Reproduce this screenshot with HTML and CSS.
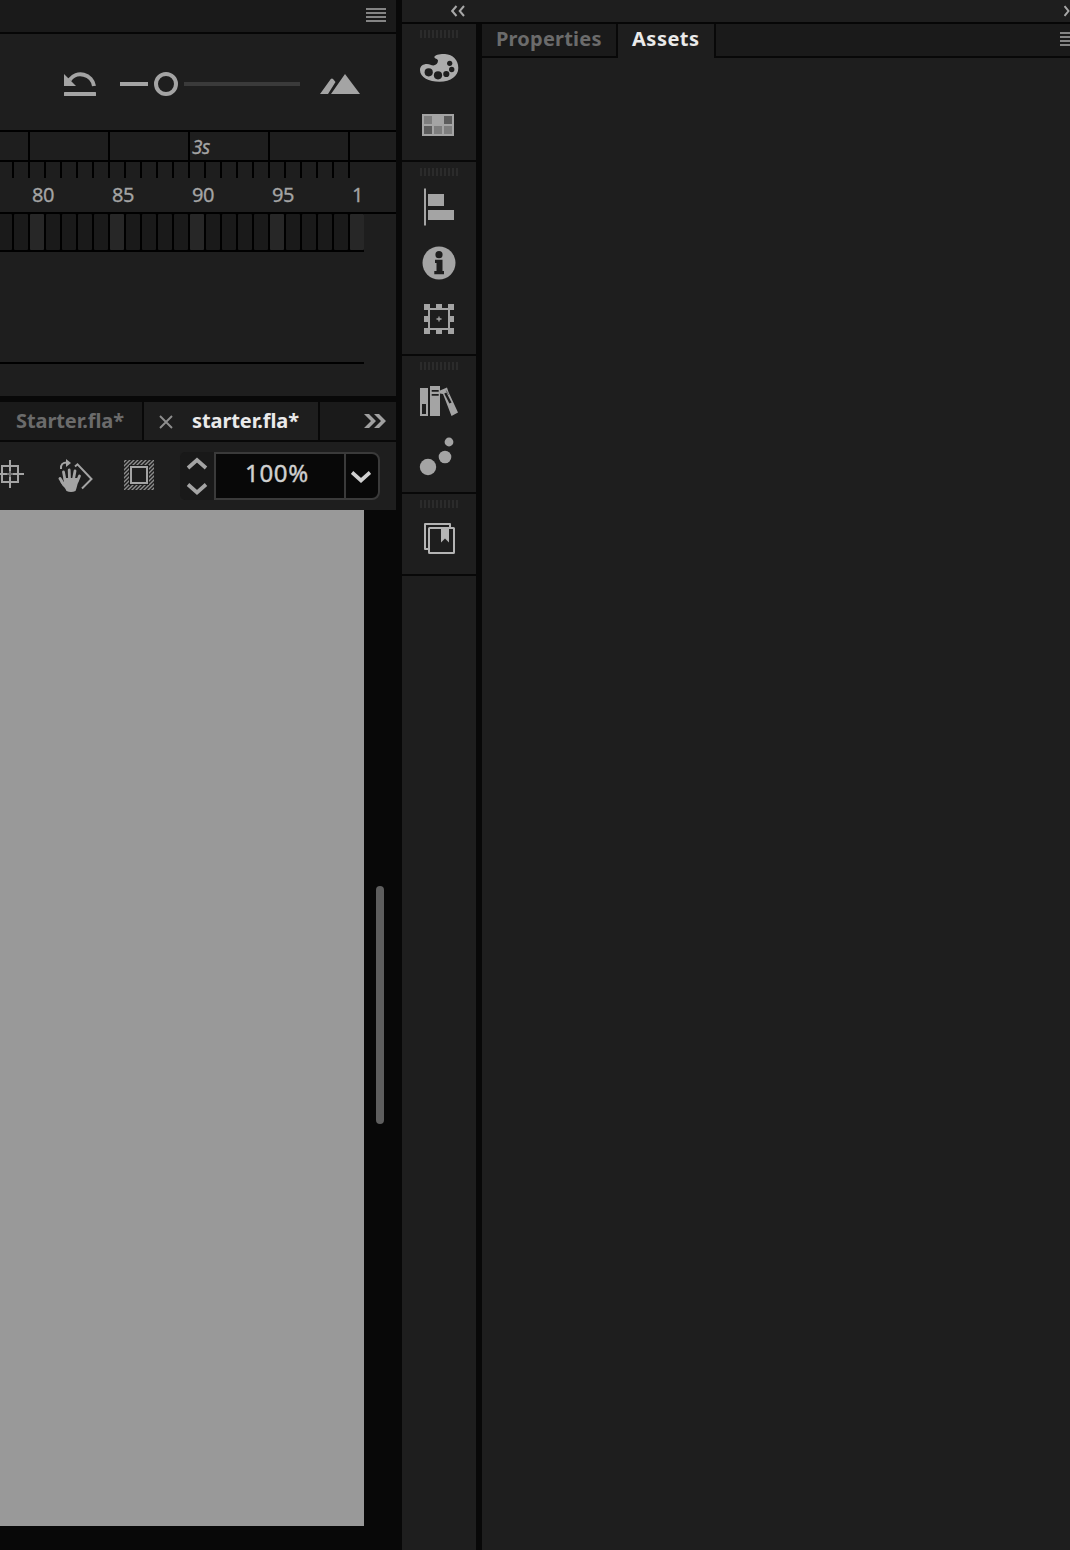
FILE: index.html
```html
<!DOCTYPE html>
<html lang="en">
  <head>
    <meta charset="UTF-8" />
    <meta name="viewport" content="width=device-width, initial-scale=1.0" />
    <title>starter.fla</title>
    <link rel="stylesheet" href="styles.css">
  </head>
  <body>
    <div class="workspace">
      <div class="editor">
        <section class="timeline">
          <div class="timeline-header">
            <div class="menu-icon"><i></i><i></i><i></i><i></i></div>
          </div>

          <div class="timeline-controls">
            <svg class="reset-icon" width="32" height="26" viewBox="0 0 32 26">
              <path d="M0 3 L12 15 H0 Z" fill="#a4a4a4" />
              <path d="M5.500 9 A13.600 13.600 0 0 1 30 15" fill="none" stroke="#a4a4a4" stroke-width="4" />
              <rect y="21" width="32" height="4" rx="0.500" fill="#a4a4a4" />
            </svg>
            <div class="slider">
              <div class="slider-fill"></div>
              <div class="slider-knob"></div>
              <div class="slider-rest"></div>
            </div>
            <svg class="mountains" width="40" height="20" viewBox="0 0 40 20">
              <path d="M25 0 L40 20 H11 Z M0 20 L10.800 5 Q12 4 13 5 L15.500 8 L8 20 Z" fill="#a4a4a4" />
            </svg>
          </div>

          <div class="seconds-row">
            <span></span><span></span><span></span><span class="second">3s</span><span></span><span></span>
          </div>

          <div class="ruler">
            <div class="ticks"></div>
            <div class="frame-numbers">
              <span>80</span><span>85</span><span>90</span><span>95</span><span>1</span>
            </div>
          </div>

          <div class="frames-row">
            <div class="frames" id="frames"></div>
          </div>
          <div class="layer-space"></div>
          <div class="layer-end"></div>
        </section>

        <section class="document">
          <div class="doc-tabs">
            <div class="doc-tab">Starter.fla*</div>
            <div class="doc-tab active">
              <svg width="14" height="14" viewBox="0 0 14 14">
                <path d="M1 1 L13 13 M13 1 L1 13" stroke="#8e8e8e" stroke-width="1.900" />
              </svg>
              <span>starter.fla*</span>
            </div>
            <div class="doc-more">
              <svg width="22" height="14" viewBox="0 0 22 14">
                <path d="M0 0 H5 L12 7 L5 14 H0 L7 7 Z M10 0 H15 L22 7 L15 14 H10 L17 7 Z" fill="#a0a0a0" />
              </svg>
            </div>
          </div>

          <div class="doc-toolbar">
            <svg class="tools" width="180" height="68" viewBox="0 0 180 68">
              <!-- center stage -->
              <g fill="none" stroke="#a4a4a4" stroke-width="2">
                <rect x="2" y="24" width="16" height="16" />
                <path d="M10 18 V29 M10 35 V46 M-2 32 H7 M13 32 H24" />
                <path d="M7 32 H13 M10 29 V35" stroke="#777" />
              </g>
              <!-- rotate hand -->
              <path d="M75 24.500 L77.500 22.300 L91.500 37 L82 46.500" fill="none" stroke="#a4a4a4" stroke-width="2" />
              <path d="M61 27 C60.500 22 63 20.500 67 20.500" fill="none" stroke="#a4a4a4" stroke-width="2" />
              <path d="M66 17 L71 21 L66 25 Z" fill="#a4a4a4" />
              <path d="M64 43 L60 36.500" stroke="#a4a4a4" stroke-width="3" stroke-linecap="round" />
              <path d="M65 38 L63.500 30 M69.500 37 L69.200 28 M73.500 37 L75 29 M77 40 L79.500 34" stroke="#a4a4a4" stroke-width="2.800" stroke-linecap="round" />
              <path d="M63.600 36 H77.500 L78.600 38 C77.500 42 76.500 47 75.500 49 Q71 51 66.500 49 C65.500 46 62 43 60 39.500 L64 40 Z" fill="#a4a4a4" />
              <!-- clip outside stage -->
              <defs>
                <pattern id="hatch" width="4" height="4" patternUnits="userSpaceOnUse">
                  <path d="M-1 1 L1 -1 M0 4 L4 0 M3 5 L5 3" stroke="#8e8e8e" stroke-width="1.400" />
                </pattern>
              </defs>
              <rect x="124" y="18" width="30" height="30" fill="url(#hatch)" />
              <rect x="129" y="23" width="20" height="20" fill="#1e1e1e" />
              <rect x="131" y="25" width="16" height="16" fill="none" stroke="#a4a4a4" stroke-width="2" />
            </svg>
            <div class="stepper">
              <svg width="34" height="48" viewBox="0 0 34 48">
                <path d="M8 16 L17 8 L26 16 M8 32.500 L17 40.500 L26 32.500" fill="none" stroke="#a4a4a4" stroke-width="3.700" />
              </svg>
            </div>
            <div class="zoom-box">
              <div class="zoom-value">100%</div>
              <div class="zoom-arrow">
                <svg width="20" height="14" viewBox="0 0 20 14">
                  <path d="M1 1.500 L10 9.500 L19 1.500" fill="none" stroke="#d0d0d0" stroke-width="3.700" />
                </svg>
              </div>
            </div>
          </div>

          <div class="canvas-area">
            <div class="stage"></div>
            <div class="scrollbar"><div class="scroll-thumb"></div></div>
          </div>
        </section>
      </div>

      <div class="dock">
        <div class="dock-header">
          <svg width="14" height="12" viewBox="0 0 14 12">
            <path d="M5.500 1 L1.200 6 L5.500 11 M13 1 L8.700 6 L13 11" fill="none" stroke="#a8a8a8" stroke-width="2" />
          </svg>
          <svg width="6" height="12" viewBox="0 0 6 12">
            <path d="M0.500 1 L4.500 6 L0.500 11" fill="none" stroke="#a8a8a8" stroke-width="2" />
          </svg>
        </div>

        <div class="dock-body">
          <div class="icon-bar">
            <div class="icon-group">
              <div class="grip"></div>
              <svg width="74" height="56" viewBox="0 0 74 56">
                <path d="M18 30 C18 26 21 24 25 24 C28 24.300 29 25.500 31.500 25.500 C34.500 25 36 23 36 20.500 C36 18.500 32.300 19 32.300 16.700 C34 14.300 39 14 43 14 C51 14.500 56.300 20 56.300 28 C56.300 36 49 41.700 37.500 41.700 C27 41.700 18 37.500 18 30 Z" fill="#acacac" />
                <g fill="#1e1e1e">
                  <circle cx="26.700" cy="32.300" r="4.100" />
                  <circle cx="36" cy="35.300" r="4.100" />
                  <circle cx="44.300" cy="34" r="3.100" />
                  <circle cx="49.700" cy="29.500" r="2.700" />
                  <circle cx="47.700" cy="23.300" r="2.600" />
                </g>
              </svg>
              <svg width="74" height="56" viewBox="0 0 74 56">
                <rect x="20" y="18" width="32" height="22" fill="#a4a4a4" />
                <path d="M22 20 h8 v8 h-8 Z M32 30 h8 v8 h-8 Z M42 30 h8 v8 h-8 Z" fill="#7e7e7e" />
                <path d="M42 20 h8 v8 h-8 Z M22 30 h8 v8 h-8 Z" fill="#5c5c5c" />
              </svg>
            </div>

            <div class="icon-group">
              <div class="grip"></div>
              <svg width="74" height="56" viewBox="0 0 74 56">
                <path d="M22 10.500 H24 V47.500 H22 Z M26 16 H42 V28 H26 Z M26 32 H52 V42 H26 Z" fill="#a4a4a4" />
              </svg>
              <svg width="74" height="56" viewBox="0 0 74 56">
                <circle cx="37" cy="29" r="16.500" fill="#a4a4a4" />
                <circle cx="37" cy="20.700" r="3.600" fill="#1e1e1e" />
                <path d="M33 25.700 H40.500 V37 H42 V40.300 H32.300 V37 H34.500 V29 H33 Z" fill="#1e1e1e" />
              </svg>
              <svg width="74" height="56" viewBox="0 0 74 56">
                <rect x="27" y="19" width="20" height="20" fill="none" stroke="#a4a4a4" stroke-width="2" />
                <path d="M22 14 h6 v6 h-6 Z M34 14 h6 v6 h-6 Z M46 14 h6 v6 h-6 Z M22 26 h6 v6 h-6 Z M46 26 h6 v6 h-6 Z M22 38 h6 v6 h-6 Z M34 38 h6 v6 h-6 Z M46 38 h6 v6 h-6 Z" fill="#a4a4a4" />
                <path d="M37 26.500 V31.500 M34.500 29 H39.500" stroke="#a4a4a4" stroke-width="1.300" />
              </svg>
            </div>

            <div class="icon-group">
              <div class="grip"></div>
              <svg width="74" height="56" viewBox="0 0 74 56">
                <path d="M18 16 H26 V44 H18 Z M28 14 H38 V44 H28 Z" fill="#a4a4a4" />
                <path d="M20 32 h4 v10 h-4 Z M29.700 18 h7 v1.700 h-7 Z M29.700 22 h7 v1.700 h-7 Z" fill="#1e1e1e" />
                <path d="M38 18.500 L45 15.500 L46.500 20 L56 40.500 L49.500 44 L41 22 L38 21.500 Z" fill="#a4a4a4" />
                <path d="M43.300 21 L48.500 31" stroke="#1e1e1e" stroke-width="2.400" />
                <path d="M44.200 18.500 L46.500 23" stroke="#666" stroke-width="1" />
              </svg>
              <svg width="74" height="56" viewBox="0 0 74 56">
                <g fill="#a4a4a4">
                  <circle cx="26" cy="39" r="8.200" />
                  <circle cx="43" cy="29" r="6.300" />
                  <circle cx="47" cy="14" r="4.400" />
                </g>
              </svg>
            </div>

            <div class="icon-group">
              <div class="grip"></div>
              <svg width="74" height="56" viewBox="0 0 74 56">
                <path d="M26 39 H23 V14 H48 V17" fill="none" stroke="#b4b4b4" stroke-width="2" stroke-linejoin="round" />
                <rect x="27" y="18" width="25" height="25" rx="0.500" fill="none" stroke="#b4b4b4" stroke-width="2" />
                <path d="M39 18 H47 V32.500 L43 28.500 L39 32.500 Z" fill="#b4b4b4" />
              </svg>
            </div>
          </div>

          <div class="panel">
            <div class="panel-tabs">
              <div class="panel-tab properties">Properties</div>
              <div class="panel-tab active">Assets</div>
              <div class="panel-tabs-rest">
                <div class="menu-icon"><i></i><i></i><i></i><i></i></div>
              </div>
            </div>
            <div class="panel-content"></div>
          </div>
        </div>
      </div>
    </div>

    <script>
      const frames = document.getElementById('frames');

      // frames 78 to 100, every fifth one is highlighted
      for (let i = 78; i <= 100; i++) {
        const frame = document.createElement('span');
        frame.className = i % 5 === 0 ? 'frame fifth' : 'frame';
        frames.appendChild(frame);
      }
    </script>
  </body>
</html>
```

FILE: styles.css
```css
* {
  margin: 0;
  padding: 0;
  box-sizing: border-box;
}

body {
  font-family: 'Noto Sans', 'Open Sans', sans-serif;
  background: #080808;
  color: #a4a4a4;
  height: 1550px;
  overflow: hidden;
}

svg {
  display: block;
  flex: none;
}

.workspace {
  display: flex;
  gap: 6px;
  height: 1550px;
}

.editor {
  width: 396px;
  display: flex;
  flex-direction: column;
  gap: 6px;
  overflow: hidden;
}

.menu-icon {
  width: 20px;
  flex: none;
  display: flex;
  flex-direction: column;
  gap: 2px;
}

.menu-icon i {
  height: 2px;
  background: #858585;
}

/* timeline */
.timeline {
  height: 396px;
  background: #1e1e1e;
}

.timeline-header {
  height: 34px;
  padding: 8px 10px 0 0;
  display: flex;
  justify-content: flex-end;
  background: #1a1a1a;
  border-bottom: 2px solid #060606;
}

.timeline-controls {
  height: 98px;
  padding: 0 36px 0 64px;
  display: flex;
  align-items: center;
  border-bottom: 2px solid #000;
}

.reset-icon {
  margin-top: 4px;
}

.slider {
  width: 180px;
  margin: 4px 20px 0 24px;
  display: flex;
  align-items: center;
}

.slider-fill {
  width: 28px;
  height: 4px;
  background: #a4a4a4;
}

.slider-knob {
  width: 24px;
  height: 24px;
  margin: 0 6px;
  border: 4px solid #a4a4a4;
  border-radius: 50%;
}

.slider-rest {
  flex: 1;
  height: 4px;
  background: #3a3a3a;
}

.mountains {
  margin-top: 4px;
}

.seconds-row {
  height: 30px;
  display: flex;
  border-bottom: 2px solid #000;
}

.seconds-row span {
  width: 80px;
  flex: none;
  border-right: 2px solid #000;
}

.seconds-row span:first-child {
  width: 30px;
}

.seconds-row .second {
  padding-left: 2px;
  font-size: 19px;
  font-style: italic;
  line-height: 30px;
  letter-spacing: -0.5px;
  -webkit-text-stroke: 0.3px #a4a4a4;
}

.ruler {
  height: 52px;
  border-bottom: 2px solid #000;
}

.ticks {
  width: 350px;
  height: 16px;
  background: repeating-linear-gradient(90deg, transparent 0 12px, #000 12px 14px, transparent 14px 16px);
}

.frame-numbers {
  display: flex;
  padding-left: 32px;
  font-size: 20px;
  line-height: 34px;
  letter-spacing: -0.5px;
  -webkit-text-stroke: 0.3px #a4a4a4;
}

.frame-numbers span {
  width: 80px;
  flex: none;
}

.frames-row {
  height: 38px;
}

.frames {
  width: 364px;
  height: 38px;
  display: flex;
  justify-content: flex-end;
  gap: 2px;
  overflow: hidden;
  background: #000;
  border-bottom: 2px solid #000;
}

.frame {
  width: 14px;
  flex: none;
  background: #1a1a1a;
  border-radius: 1px;
}

.frame.fifth {
  background: #272727;
}

.layer-space {
  width: 364px;
  height: 112px;
  border-bottom: 2px solid #000;
}

.layer-end {
  height: 32px;
}

/* document window */
.document {
  flex: 1;
  display: flex;
  flex-direction: column;
}

.doc-tabs {
  height: 40px;
  display: flex;
  background: #1a1a1a;
  border-bottom: 2px solid #080808;
  font-size: 20px;
  font-weight: bold;
  line-height: 37px;
}

.doc-tab {
  width: 144px;
  padding-left: 16px;
  color: #6b6b6b;
  letter-spacing: -0.1px;
  border-right: 2px solid #080808;
}

.doc-tab.active {
  width: 176px;
  padding-left: 15px;
  display: flex;
  align-items: flex-start;
  gap: 19px;
  background: #1e1e1e;
  color: #eaeaea;
}

.doc-tab.active svg {
  margin-top: 13px;
}

.doc-more {
  flex: 1;
  padding: 12px 10px 0 0;
  display: flex;
  justify-content: flex-end;
}

.doc-toolbar {
  height: 68px;
  display: flex;
  align-items: center;
  background: #1e1e1e;
}

.stepper {
  width: 34px;
  height: 48px;
  background: #191919;
  border-radius: 5px 0 0 5px;
}

.zoom-box {
  width: 166px;
  height: 48px;
  display: flex;
  background: #080808;
  border: 2px solid #3a3a3a;
  border-radius: 0 8px 8px 0;
}

.zoom-value {
  width: 130px;
  padding-left: 29px;
  border-right: 2px solid #3a3a3a;
  color: #d0d0d0;
  font-size: 24px;
  line-height: 38px;
  letter-spacing: 0.7px;
  -webkit-text-stroke: 0.4px #d0d0d0;
}

.zoom-arrow {
  padding: 17px 0 0 5px;
}

.canvas-area {
  flex: 1;
  display: flex;
  padding-bottom: 24px;
}

.stage {
  width: 364px;
  background: #999;
}

.scrollbar {
  width: 32px;
  padding: 376px 12px 0;
}

.scroll-thumb {
  height: 238px;
  background: #5e5e5e;
  border-radius: 4px;
}

/* right side dock */
.dock {
  flex: 1;
  display: flex;
  flex-direction: column;
}

.dock-header {
  height: 24px;
  padding: 0 0 0 49px;
  display: flex;
  align-items: center;
  justify-content: space-between;
  background: #1e1e1e;
  border-bottom: 2px solid #060606;
}

.dock-body {
  flex: 1;
  display: flex;
  gap: 6px;
}

.icon-bar {
  width: 74px;
  background: #1e1e1e;
}

.icon-group {
  padding: 6px 0 8px;
  border-bottom: 2px solid #080808;
}

.grip {
  width: 38px;
  height: 8px;
  margin: 0 0 2px 18px;
  background: repeating-linear-gradient(90deg, #2b2b2b 0 2px, transparent 2px 4px);
}

.panel {
  flex: 1;
  display: flex;
  flex-direction: column;
  background: #1e1e1e;
}

.panel-tabs {
  height: 34px;
  display: flex;
  font-size: 20px;
  font-weight: bold;
  line-height: 29px;
}

.panel-tab {
  padding-left: 14px;
  border-right: 2px solid #080808;
}

.panel-tab.properties {
  width: 136px;
  background: #1a1a1a;
  border-bottom: 2px solid #080808;
  color: #6b6b6b;
  letter-spacing: 0.2px;
}

.panel-tab.active {
  width: 98px;
  color: #eaeaea;
  letter-spacing: 0.5px;
}

.panel-tabs-rest {
  flex: 1;
  padding-top: 8px;
  display: flex;
  justify-content: flex-end;
  overflow: hidden;
  background: #1a1a1a;
  border-bottom: 2px solid #080808;
}

.panel-tabs-rest .menu-icon {
  width: 10px;
}

.panel-content {
  flex: 1;
}
```
